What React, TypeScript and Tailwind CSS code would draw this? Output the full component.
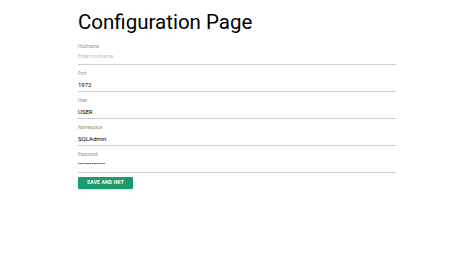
const fields = [
  { label: "Hostname", value: "", placeholder: "Enter hostname" },
  { label: "Port", value: "1972" },
  { label: "User", value: "USER" },
  { label: "Namespace", value: "SQLAdmin" },
  { label: "Password", value: "••••••••••••••••", password: true },
]

export default function App() {
  return (
    <div className="h-[269px] w-[474px] bg-white font-['Roboto',sans-serif]">
      <div className="ml-[78px] w-[318px] pt-[7px]">
        <h1 className="text-[20.5px] leading-[30px] text-black">Configuration Page</h1>
        <div className="mt-[7px] flex flex-col gap-[6px]">
          {fields.map((f) => (
            <div key={f.label} className="flex flex-col">
              <label className="text-[4.5px] leading-[6px] text-[#a08f7b]">{f.label}</label>
              <div className="flex h-[15px] items-center border-b border-[#cfcfcf]">
                {f.value ? (
                  <span className={f.password ? "text-[5px] text-black" : "text-[6px] text-black"}>{f.value}</span>
                ) : (
                  <span className="text-[5px] text-[#c9bda9]">{f.placeholder}</span>
                )}
              </div>
            </div>
          ))}
        </div>
        <button className="mt-[4px] flex h-[12px] w-[55px] items-center justify-center rounded-[1px] bg-[#1b9c6c] text-[5px] font-bold tracking-[0.2px] text-white shadow-sm">
          SAVE AND INIT
        </button>
      </div>
    </div>
  )
}
